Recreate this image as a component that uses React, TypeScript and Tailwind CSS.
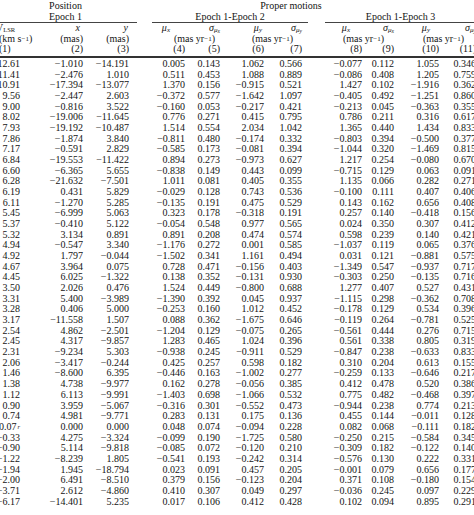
import React from "react";

const rows: string[][] = [
  ["12.61", "-1.010", "-14.191", "0.005", "0.143", "1.062", "0.566", "-0.077", "0.112", "1.055", "0.346"],
  ["11.41", "-2.476", "1.010", "0.511", "0.453", "1.088", "0.889", "-0.086", "0.408", "1.205", "0.759"],
  ["10.91", "-17.394", "-13.077", "1.370", "0.156", "-0.915", "0.521", "1.427", "0.102", "-1.916", "0.362"],
  ["9.56", "-2.447", "2.603", "-0.372", "0.577", "-1.642", "1.097", "-0.405", "0.492", "-1.251", "0.860"],
  ["9.00", "-0.816", "3.522", "-0.160", "0.053", "-0.217", "0.421", "-0.213", "0.045", "-0.363", "0.355"],
  ["8.02", "-19.006", "-11.645", "0.776", "0.271", "0.415", "0.795", "0.786", "0.211", "0.316", "0.617"],
  ["7.93", "-19.192", "-10.487", "1.514", "0.554", "2.034", "1.042", "1.365", "0.440", "1.434", "0.833"],
  ["7.86", "-1.874", "3.840", "-0.811", "0.480", "-0.174", "0.332", "-0.803", "0.394", "-0.500", "0.377"],
  ["7.17", "-0.591", "2.829", "-0.585", "0.173", "-0.081", "0.394", "-1.044", "0.320", "-1.469", "0.815"],
  ["6.84", "-19.553", "-11.422", "0.894", "0.273", "-0.973", "0.627", "1.217", "0.254", "-0.080", "0.670"],
  ["6.60", "-6.365", "5.655", "-0.838", "0.149", "0.443", "0.099", "-0.715", "0.129", "0.063", "0.091"],
  ["6.28", "-21.632", "-7.501", "1.011", "0.081", "0.405", "0.355", "1.135", "0.066", "0.282", "0.271"],
  ["6.19", "0.431", "5.829", "-0.029", "0.128", "0.743", "0.536", "-0.100", "0.111", "0.407", "0.406"],
  ["6.11", "-1.270", "5.285", "-0.135", "0.191", "0.475", "0.529", "0.143", "0.162", "0.656", "0.408"],
  ["5.45", "-6.999", "5.063", "0.323", "0.178", "-0.318", "0.191", "0.257", "0.140", "-0.418", "0.156"],
  ["5.37", "-0.410", "5.122", "-0.054", "0.548", "0.977", "0.565", "0.024", "0.350", "0.307", "0.412"],
  ["5.32", "3.134", "0.891", "0.891", "0.208", "0.474", "0.574", "0.598", "0.239", "0.140", "0.421"],
  ["4.94", "-0.547", "3.340", "-1.176", "0.272", "0.001", "0.585", "-1.037", "0.119", "0.065", "0.376"],
  ["4.92", "1.797", "-0.044", "-1.502", "0.341", "1.161", "0.494", "0.031", "0.121", "-0.881", "0.575"],
  ["4.67", "3.964", "0.075", "0.728", "0.471", "-0.156", "0.403", "-1.349", "0.547", "-0.937", "0.717"],
  ["4.45", "6.025", "-1.322", "0.138", "0.352", "-0.131", "0.930", "-0.303", "0.250", "-0.135", "0.716"],
  ["3.50", "2.026", "0.476", "1.524", "0.449", "-0.800", "0.688", "1.277", "0.407", "0.527", "0.431"],
  ["3.31", "5.400", "-3.989", "-1.390", "0.392", "0.045", "0.937", "-1.115", "0.298", "-0.362", "0.708"],
  ["3.28", "0.406", "5.000", "-0.253", "0.160", "1.012", "0.452", "-0.178", "0.129", "0.534", "0.396"],
  ["3.17", "-11.558", "1.507", "0.088", "0.362", "-1.675", "0.646", "-0.119", "0.264", "-0.781", "0.525"],
  ["2.54", "4.862", "-2.501", "-1.204", "0.129", "-0.075", "0.265", "-0.561", "0.444", "0.276", "0.715"],
  ["2.45", "4.317", "-9.857", "1.283", "0.465", "1.024", "0.396", "0.561", "0.338", "0.805", "0.319"],
  ["2.31", "-9.234", "5.303", "-0.938", "0.245", "-0.911", "0.529", "-0.847", "0.238", "-0.633", "0.833"],
  ["2.06", "-3.417", "-0.244", "0.425", "0.257", "0.598", "0.182", "0.310", "0.204", "0.613", "0.155"],
  ["1.46", "-8.600", "6.395", "-0.446", "0.163", "-1.002", "0.277", "-0.259", "0.133", "-0.646", "0.217"],
  ["1.38", "4.738", "-9.977", "0.162", "0.278", "-0.056", "0.385", "0.412", "0.478", "0.520", "0.386"],
  ["1.12", "6.113", "-9.991", "-1.403", "0.698", "-1.066", "0.532", "0.775", "0.482", "-0.468", "0.397"],
  ["0.90", "3.959", "-5.067", "-0.316", "0.301", "-0.552", "0.473", "-0.944", "0.238", "0.774", "0.213"],
  ["0.74", "4.981", "-9.771", "0.283", "0.131", "0.175", "0.136", "0.455", "0.144", "-0.011", "0.128"],
  ["0.07r", "0.000", "0.000", "0.048", "0.074", "-0.094", "0.228", "0.082", "0.068", "-0.111", "0.182"],
  ["-0.33", "4.275", "-3.324", "-0.099", "0.190", "-1.725", "0.580", "-0.250", "0.215", "-0.584", "0.345"],
  ["-0.90", "5.114", "-9.818", "-0.085", "0.072", "-0.120", "0.210", "-0.309", "0.182", "-0.122", "0.140"],
  ["-1.22", "-8.239", "1.805", "-0.541", "0.193", "-0.242", "0.314", "-0.576", "0.130", "0.222", "0.331"],
  ["-1.94", "1.945", "-18.794", "0.023", "0.091", "0.457", "0.205", "-0.001", "0.079", "0.656", "0.177"],
  ["-2.00", "6.491", "-8.510", "0.379", "0.156", "-0.123", "0.204", "0.371", "0.108", "-0.180", "0.154"],
  ["-3.71", "2.612", "-4.860", "0.410", "0.307", "0.049", "0.297", "-0.036", "0.245", "0.097", "0.229"],
  ["-6.17", "-14.401", "5.235", "0.017", "0.106", "0.412", "0.428", "0.102", "0.094", "0.895", "0.291"],
];

const fmt = (v: string) => v.replace(/^-/, "\u2212");

const Mu = ({ s }: { s: string }) => (
  <span>
    <span className="italic">μ</span>
    <sub className="italic text-[7px] align-baseline relative top-[1px]">{s}</sub>
  </span>
);

const Sigma = ({ s }: { s: string }) => (
  <span>
    <span className="italic">σ</span>
    <sub className="text-[7px] align-baseline relative top-[1px]">
      <span className="italic">μ</span>
      <span className="italic text-[5.5px] relative top-[1px]">{s}</span>
    </sub>
  </span>
);

const Unit = () => (
  <span>
    (mas yr<sup className="text-[7px] relative top-[-1px]">−1</sup>)
  </span>
);

const GRID = "grid grid-cols-[26px_63px_46px_56px_35px_44px_38px_60px_32px_45px_37px]";

export default function App() {
  return (
    <div className="w-[474px] h-[515px] overflow-hidden bg-white text-[#141414] font-['Liberation_Serif',serif] text-[10px]">
      <div className="ml-[-6px] w-[482px]">
        <div className="flex h-[11px] leading-[11px]">
          <div className="w-[143px] text-center">Position</div>
          <div className="w-[339px] text-center pr-[31px]">Proper motions</div>
        </div>
        <div className="flex h-[12px] leading-[11px]">
          <div className="w-[143px] text-center border-b border-[#444]">Epoch 1</div>
          <div className="w-[15px]" />
          <div className="w-[156px] text-center border-b border-[#444]">Epoch 1-Epoch 2</div>
          <div className="w-[17px]" />
          <div className="w-[151px] text-center border-b border-[#444]">Epoch 1-Epoch 3</div>
        </div>
        <div className={`${GRID} auto-rows-[10.5px] leading-[10.5px] whitespace-nowrap`}>
          <div className="pl-[2px]">
            V<sub className="text-[6.5px] align-baseline relative top-[1px]">LSR</sub>
          </div>
          <div className="text-right pr-[3px] italic">x</div>
          <div className="text-right pr-[1px] italic">y</div>
          <div className="text-right pr-[15px]"><Mu s="x" /></div>
          <div className="text-right"><Sigma s="x" /></div>
          <div className="text-right pr-[2px]"><Mu s="y" /></div>
          <div className="text-right"><Sigma s="y" /></div>
          <div className="text-right pr-[12px]"><Mu s="x" /></div>
          <div className="text-right"><Sigma s="x" /></div>
          <div className="text-right pr-[9px]"><Mu s="y" /></div>
          <div className="text-right"><Sigma s="y" /></div>

          <div className="pl-[5px]">
            (km s<sup className="text-[7px] relative top-[-1px]">−1</sup>)
          </div>
          <div className="text-right">(mas)</div>
          <div className="text-right">(mas)</div>
          <div className="col-span-2 text-right pr-[5px]"><Unit /></div>
          <div className="col-span-2 text-right pr-[9px]"><Unit /></div>
          <div className="col-span-2 text-right pr-[10px]"><Unit /></div>
          <div className="col-span-2 text-right pr-[12px]"><Unit /></div>

          <div className="pl-[5px]">(1)</div>
          <div className="text-right">(2)</div>
          <div className="text-right">(3)</div>
          <div className="text-right">(4)</div>
          <div className="text-right">(5)</div>
          <div className="text-right">(6)</div>
          <div className="text-right">(7)</div>
          <div className="text-right">(8)</div>
          <div className="text-right">(9)</div>
          <div className="text-right">(10)</div>
          <div className="text-right">(11)</div>
        </div>
        <div className="mt-[1.5px] h-[2px] bg-[#333]" />
        <div className={`${GRID} auto-rows-[10.68px] leading-[10.68px] mt-[1px] whitespace-nowrap`}>
          {rows.map((r, i) =>
            r.map((v, j) => (
              <div key={`${i}-${j}`} className="text-right">
                {v === "0.07r" ? (
                  <span>
                    0.07<sup className="italic text-[6.5px] relative top-[-1px] ml-[1px]">r</sup>
                  </span>
                ) : (
                  fmt(v)
                )}
              </div>
            ))
          )}
        </div>
      </div>
    </div>
  );
}
